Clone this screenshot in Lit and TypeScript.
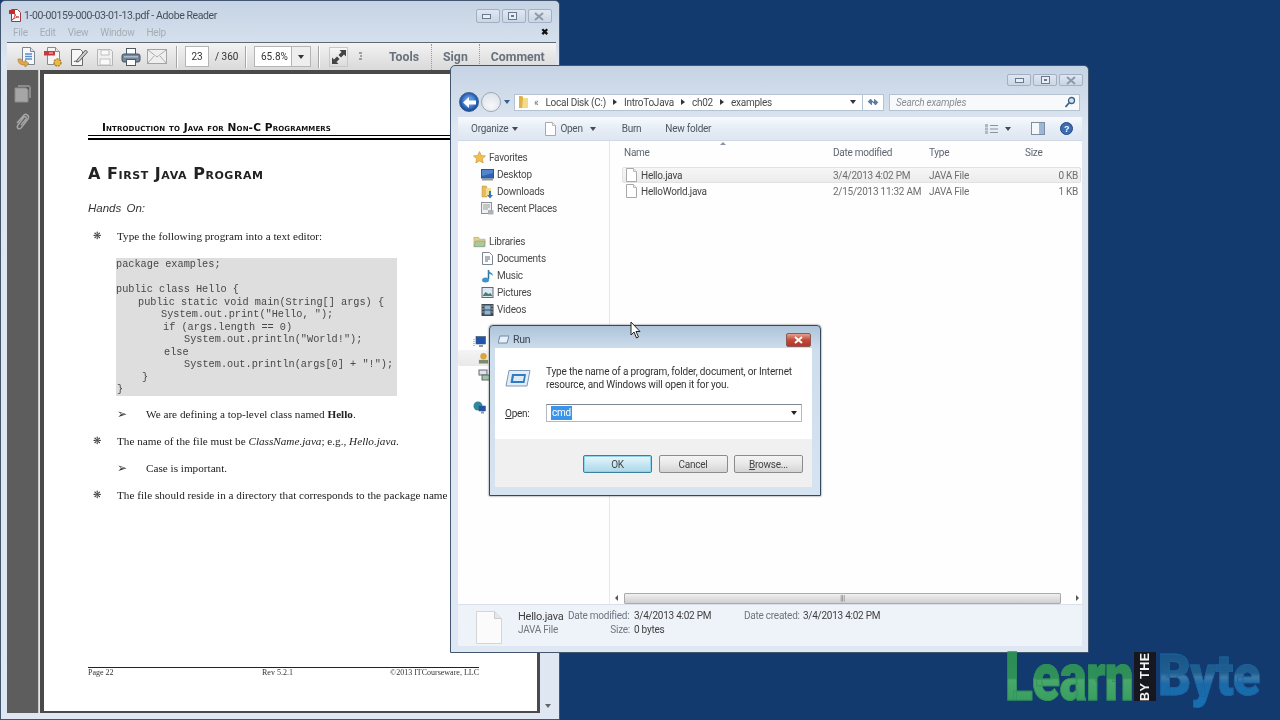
import { LitElement, css, html, svg } from 'lit';
import { customElement } from 'lit/decorators.js';

const codeLines: [number, string][] = [
  [0, 'package examples;'],
  [0, ''],
  [0, 'public class Hello {'],
  [22, 'public static void main(String[] args) {'],
  [45, 'System.out.print("Hello, ");'],
  [47, 'if (args.length == 0)'],
  [68, 'System.out.println("World!");'],
  [48, 'else'],
  [68, 'System.out.println(args[0] + "!");'],
  [26, '}'],
  [1, '}'],
];

const fileIcon = svg`<svg width="11" height="14" viewBox="0 0 11 14"><path d="M.5.500h7l3 3v10H.5z" fill="#fff" stroke="#a8a8a8"/><path d="M7.500.5v3h3" fill="#eee" stroke="#bbb"/></svg>`;
const winBtnMin = svg`<svg width="9" height="5" viewBox="0 0 9 5"><rect x=".5" y=".5" width="8" height="4" fill="#e8eef5" stroke="#6a7a8e"/></svg>`;
const winBtnMax = svg`<svg width="9" height="8" viewBox="0 0 9 8"><rect x=".5" y=".5" width="8" height="7" fill="#e8eef5" stroke="#6a7a8e"/><rect x="3" y="3" width="3" height="2" fill="#6a7a8e"/></svg>`;
const winBtnClose = svg`<svg width="10" height="9" viewBox="0 0 10 9"><path d="M1 1l8 7M9 1L1 8" stroke="#8c9aab" stroke-width="2"/></svg>`;

const readerIcons = [
  svg`<svg width="20" height="22" viewBox="0 0 20 22"><path d="M5.500 1.500h8l4 4v13h-12z" fill="#f6f8fb" stroke="#7a8797"/><path d="M13.500 1.500v4h4" fill="#dfe5ec" stroke="#7a8797"/><path d="M8 8h7M8 10.500h7M8 13h7" stroke="#5b8ccb" stroke-width="1.300"/><path d="M1 13c0 4 2 6 7 6v2l4-3.500L8 14v2c-2 0-3-1-4-3z" fill="#e2a548" stroke="#a8752a" stroke-width=".6"/></svg>`,
  svg`<svg width="20" height="22" viewBox="0 0 20 22"><path d="M4.500 1.500h8l4 4v13h-12z" fill="#f7f4f4" stroke="#8a8a8a"/><path d="M12.500 1.500v4h4" fill="#e5e5e5" stroke="#8a8a8a"/><rect x="1" y="5" width="11" height="4.500" fill="#c8383f"/><path d="M6 7h4" stroke="#f3c9c9"/><circle cx="14.500" cy="16.500" r="3.500" fill="#eab94a" stroke="#a9822b" stroke-width="1.500" stroke-dasharray="2 1"/></svg>`,
  svg`<svg width="20" height="22" viewBox="0 0 20 22"><path d="M2.500 3.500h9l2 2v14h-11z" fill="#f6f6f6" stroke="#6a6a6a"/><path d="M5 16c1-2 2 0 3-1" fill="none" stroke="#555"/><path d="M8 14l8.500-10 2 2L10 15.500 7.500 16z" fill="#cfcfcf" stroke="#5a5a5a"/></svg>`,
  svg`<svg width="18" height="20" viewBox="0 0 18 20"><path d="M1.500 2.500h13l2 2v14h-15z" fill="#f0f0f0" stroke="#b5b5b5"/><rect x="5" y="3" width="8" height="5" fill="#fafafa" stroke="#bfbfbf"/><rect x="4" y="12" width="10" height="6" fill="#fafafa" stroke="#bfbfbf"/></svg>`,
  svg`<svg width="20" height="20" viewBox="0 0 20 20"><rect x="5.500" y="1.500" width="9" height="6" fill="#fff" stroke="#4e5a68"/><rect x="1" y="7" width="18" height="8" rx="2" fill="#73879c" stroke="#46525f"/><rect x="3" y="9" width="14" height="1.500" fill="#a9bccd"/><rect x="5.500" y="12.500" width="9" height="6" fill="#fff" stroke="#4e5a68"/></svg>`,
  svg`<svg width="20" height="15" viewBox="0 0 20 15"><rect x=".5" y=".5" width="19" height="14" fill="#efefef" stroke="#a3a3a3"/><path d="M1 1l9 7 9-7M1 14l6-7M19 14l-6-7" fill="none" stroke="#adadad"/></svg>`,
];

const navIcons: Record<string, unknown> = {
  star: svg`<svg width="13" height="13" viewBox="0 0 13 13"><path d="M6.500.5l1.800 3.900 4.200.5-3.100 2.900.8 4.200-3.700-2.100-3.700 2.100.8-4.200L.5 4.900l4.200-.5z" fill="#f2bf4a" stroke="#c28f3e" stroke-width=".6"/></svg>`,
  desktop: svg`<svg width="13" height="12" viewBox="0 0 13 12"><rect x=".5" y=".5" width="12" height="8.500" fill="#2f62b5" stroke="#47525f"/><path d="M1 1h11v3L1 7z" fill="#4f86cf"/><rect x="1" y="9" width="11" height="2.500" fill="#8d98a5"/></svg>`,
  downloads: svg`<svg width="13" height="14" viewBox="0 0 13 14"><path d="M1 1h4l1 1v10H1z" fill="#e3bd5c" stroke="#b7923f" stroke-width=".5"/><path d="M5 3h5v8H5z" fill="#f1dc94"/><path d="M8 6v4H6l3 3.500 3-3.500h-2V6z" fill="#2f78c2"/></svg>`,
  recent: svg`<svg width="13" height="13" viewBox="0 0 13 13"><rect x=".5" y=".5" width="10" height="11" fill="#eef0f2" stroke="#8c9298"/><path d="M2 3h7M2 5h7M2 7h5" stroke="#9c9c9c"/><rect x="7" y="8" width="5.500" height="4.500" fill="#aab2ba"/></svg>`,
  libraries: svg`<svg width="14" height="12" viewBox="0 0 14 12"><path d="M1 1h5l1 2h6v8H1z" fill="#e7d08a" stroke="#a99a5f" stroke-width=".6"/><path d="M3 5h10l-1 6H1z" fill="#a9c9a0" stroke="#7d9a88" stroke-width=".6"/></svg>`,
  documents: svg`<svg width="11" height="13" viewBox="0 0 11 13"><path d="M.5.500h7l3 3v9H.5z" fill="#fff" stroke="#7d8590"/><path d="M3 5h5M3 7h5M3 9h3" stroke="#5a6b85"/></svg>`,
  music: svg`<svg width="12" height="14" viewBox="0 0 12 14"><path d="M7 1v9" stroke="#2f6f9e" stroke-width="1.500"/><ellipse cx="4" cy="11" rx="3.500" ry="2.500" fill="#3f93c9"/><path d="M7 1c1 3 5 2 4 6-1-2-3-2-4-2z" fill="#3f93c9"/></svg>`,
  pictures: svg`<svg width="12" height="11" viewBox="0 0 12 11"><rect x=".5" y=".5" width="11" height="10" fill="#dbe9f2" stroke="#667"/><path d="M1 9l3-4 3 2 2-1 2 3z" fill="#4b7e6e"/></svg>`,
  videos: svg`<svg width="12" height="12" viewBox="0 0 12 12"><rect width="12" height="12" fill="#3f4a55"/><rect x="3" y="1.500" width="6" height="4" fill="#8fb7d3"/><rect x="3" y="6.500" width="6" height="4" fill="#8fb7d3"/><path d="M1 2h1M1 5h1M1 8h1M10 2h1M10 5h1M10 8h1" stroke="#fff"/></svg>`,
  computer: svg`<svg width="13" height="12" viewBox="0 0 13 12"><path d="M1 3v8" stroke="#7d8590" stroke-dasharray="1 1"/><rect x="3" y=".5" width="9.500" height="7.500" fill="#1f55ad" stroke="#47525f" stroke-width=".6"/><path d="M6 9h4v2H6z" fill="#8d98a5"/></svg>`,
  disk: svg`<svg width="12" height="13" viewBox="0 0 12 13"><circle cx="6" cy="4" r="3.500" fill="#d9a441"/><path d="M1 8h10v4H1z" fill="#7d8b6a"/></svg>`,
  network: svg`<svg width="13" height="12" viewBox="0 0 13 12"><rect x="1" y="1" width="8" height="5" fill="#dde3ea" stroke="#667"/><rect x="4" y="6" width="8" height="5" fill="#9cc79c" stroke="#667"/></svg>`,
  globe: svg`<svg width="13" height="13" viewBox="0 0 13 13"><circle cx="5" cy="5" r="4.500" fill="#2f8a9c"/><rect x="6" y="5" width="6.500" height="5" fill="#1f55ad" stroke="#47525f" stroke-width=".5"/><path d="M8 10.500h3v2H8z" fill="#8d98a5"/></svg>`,
};

const navRows: [string, string, boolean][] = [
  ['star', 'Favorites', true],
  ['desktop', 'Desktop', false],
  ['downloads', 'Downloads', false],
  ['recent', 'Recent Places', false],
  ['', '', true],
  ['libraries', 'Libraries', true],
  ['documents', 'Documents', false],
  ['music', 'Music', false],
  ['pictures', 'Pictures', false],
  ['videos', 'Videos', false],
];

@customElement('app-root')
export class AppRoot extends LitElement {
  static styles = css`
    :host {
      display: block;
      position: relative;
      width: 1280px;
      height: 720px;
      overflow: hidden;
      background: #133a6f;
      font-family: Roboto, 'Open Sans', sans-serif;
      font-size: 10px;
      letter-spacing: -0.25px;
      color: #444;
      filter: blur(0.3px);
    }
    .window {
      position: absolute;
      box-sizing: border-box;
      display: flex;
      flex-direction: column;
      border: 1px solid #42576f;
      border-radius: 5px 5px 0 0;
      background: linear-gradient(#c5d3e4, #dde6f1 60px, #dfe7f2);
    }
    .win-btns {
      display: flex;
      gap: 2px;
    }
    .win-btn {
      width: 24px;
      height: 14px;
      box-sizing: border-box;
      border: 1px solid #a2b0c2;
      border-radius: 2px;
      background: linear-gradient(#dfe7f1, #cbd6e4);
      display: flex;
      align-items: center;
      justify-content: center;
    }

    /* reader */
    .reader {
      left: 0;
      top: 0;
      width: 560px;
      height: 720px;
      padding: 0 3px 6px 6px;
    }
    .reader-title {
      height: 21px;
      padding: 8px 4px 0 2px;
      box-sizing: border-box;
      display: flex;
      align-items: flex-start;
      font-size: 10.5px;
      letter-spacing: -0.4px;
      color: #474f5a;
    }
    .reader-title svg {
      margin-right: 3px;
      flex: none;
    }
    .reader-title .name {
      flex: 1;
      line-height: 13px;
    }
    .menu {
      height: 20px;
      display: flex;
      align-items: center;
      color: #a6acb4;
      padding-left: 6px;
      gap: 12px;
    }
    .menu .x {
      margin-left: auto;
      margin-right: 7px;
      color: #111;
      font-weight: 700;
      font-size: 9px;
    }
    .reader-bar {
      height: 28px;
      display: flex;
      align-items: center;
      border-top: 1px solid #5d6873;
      background: linear-gradient(#f3f3f3, #d9d9d9);
      box-sizing: border-box;
      padding-left: 7px;
      letter-spacing: 0;
      overflow: hidden;
    }
    .tool {
      width: 26px;
      display: flex;
      justify-content: center;
      flex: none;
    }
    .sep {
      width: 1px;
      height: 22px;
      background: #a5a5a5;
      border-right: 1px solid #fff;
      flex: none;
    }
    .box {
      height: 21px;
      box-sizing: border-box;
      border: 1px solid #b5b5b5;
      background: #fff;
      display: flex;
      align-items: center;
      justify-content: center;
      color: #333;
      flex: none;
    }
    .zoom-caret {
      width: 18px;
      height: 100%;
      border-left: 1px solid #b5b5b5;
      background: #eee;
      display: flex;
      align-items: center;
      justify-content: center;
    }
    .caret {
      width: 0;
      height: 0;
      border-left: 3px solid transparent;
      border-right: 3px solid transparent;
      border-top: 4px solid #333;
    }
    .fit {
      width: 19px;
      height: 20px;
      background: linear-gradient(#f7f7f7, #dcdcdc);
      border: 1px solid #c8c8c8;
      box-sizing: border-box;
      margin-left: 9px;
      flex: none;
      display: flex;
      align-items: center;
      justify-content: center;
    }
    .pane-tab {
      font-size: 12.3px;
      font-weight: 700;
      color: #68717d;
      flex: none;
    }
    .dots {
      width: 0;
      height: 26px;
      border-left: 1px dotted #999;
      flex: none;
    }
    .reader-main {
      flex: 1;
      display: flex;
      min-height: 0;
    }
    .rail {
      width: 32px;
      background: #5d5d5d;
      margin-right: 1px;
      border-right: 1px solid #c8c8c8;
      display: flex;
      flex-direction: column;
      align-items: center;
      gap: 9px;
      padding-top: 14px;
      box-sizing: border-box;
      flex: none;
    }
    .doc-area {
      width: 500px;
      height: 643px;
      box-sizing: border-box;
      background: #fff;
      border: solid #4a4a4a;
      border-width: 4px 3px 2px 4px;
      display: flex;
      flex-direction: column;
      padding-left: 44px;
      color: #111;
      white-space: nowrap;
      flex: none;
      overflow: hidden;
      letter-spacing: 0;
    }
    .side-scroll {
      flex: 1;
      display: flex;
      align-items: flex-end;
      justify-content: center;
      padding-bottom: 5px;
    }
    .side-scroll .caret {
      border-top-color: #666;
    }
    .running {
      margin: 47px 0 0 14px;
      height: 12px;
      line-height: 12px;
      font-family: 'DejaVu Sans', sans-serif;
      font-weight: 700;
      font-variant: small-caps;
      font-size: 10.6px;
      letter-spacing: 0.12px;
    }
    .rule {
      margin-top: 2px;
      height: 5px;
      box-sizing: border-box;
      width: 420px;
      border-top: 1px solid #000;
      border-bottom: 2.5px solid #000;
    }
    .heading {
      margin-top: 26px;
      height: 16px;
      line-height: 16px;
      font-family: 'DejaVu Sans', sans-serif;
      font-weight: 700;
      font-variant: small-caps;
      font-size: 16px;
      letter-spacing: 0.55px;
      color: #222;
    }
    .hands {
      margin-top: 19px;
      height: 14px;
      line-height: 14px;
      font-style: italic;
      font-family: 'Liberation Sans', sans-serif;
      font-size: 11.5px;
      word-spacing: 2px;
      color: #333;
    }
    .para {
      height: 14px;
      line-height: 14px;
      margin-top: 13px;
      font-family: 'Liberation Serif', serif;
      font-size: 11.2px;
      display: flex;
      align-items: center;
      padding-left: 2px;
      color: #222;
    }
    .para .mark {
      width: 27px;
      padding-left: 3px;
      box-sizing: border-box;
      flex: none;
      color: #333;
      font-size: 10px;
    }
    .para.sub {
      padding-left: 29px;
    }
    .para.sub .mark {
      width: 29px;
      padding-left: 0;
      font-size: 12px;
    }
    .code {
      margin: 15px 0 0 28px;
      width: 281px;
      height: 138px;
      background: #dedede;
      font-family: 'Liberation Mono', monospace;
      font-size: 10.25px;
      line-height: 12.5px;
      color: #484848;
      flex: none;
    }
    .code div {
      height: 12.5px;
      white-space: pre;
    }
    .foot {
      margin-top: 165px;
      width: 391px;
      display: grid;
      grid-template-columns: 174px 1fr auto;
      border-top: 1px solid #222;
      font-family: 'Liberation Serif', serif;
      font-size: 8px;
      line-height: 9px;
      color: #333;
    }

    /* explorer */
    .explorer {
      left: 450px;
      top: 65px;
      width: 639px;
      height: 588px;
      padding: 0 6px 6px 7px;
    }
    .ex-title {
      height: 26px;
      padding-top: 8px;
      margin-right: -1px;
      box-sizing: border-box;
      display: flex;
      justify-content: flex-end;
      flex: none;
    }
    .ex-title .win-btn {
      height: 12px;
    }
    .ex-addr {
      height: 20px;
      display: flex;
      align-items: center;
      flex: none;
    }
    .nav-btn {
      width: 20px;
      height: 20px;
      border-radius: 50%;
      box-sizing: border-box;
      flex: none;
      margin-left: 1px;
    }
    .nav-btn.back {
      background: radial-gradient(circle at 50% 45%, #5f96e0 30%, #1b54a6 65%, #12346e);
      border: 1px solid #3a5f92;
      display: flex;
      align-items: center;
      justify-content: center;
    }
    .nav-btn.fwd {
      margin-left: 2px;
      background: radial-gradient(circle at 50% 70%, #f6f8fa, #d8dee6);
      border: 1px solid #9aa7b7;
    }
    .nav-drop {
      margin: 0 4px 0 3px;
      border-top-color: #2f5f92;
    }
    .crumbs {
      width: 370px;
      height: 17px;
      box-sizing: border-box;
      background: #fff;
      border: 1px solid #b5c2d2;
      display: flex;
      align-items: center;
      padding-left: 3px;
      flex: none;
      color: #4a4a4a;
    }
    .crumbs .tri {
      width: 0;
      height: 0;
      border-top: 3px solid transparent;
      border-bottom: 3px solid transparent;
      border-left: 4px solid #333;
      margin: 0 7px 0 7px;
    }
    .crumbs .chev {
      margin: 0 7px 0 5px;
      color: #666;
    }
    .crumbs .end {
      margin-left: auto;
      display: flex;
      align-items: center;
      height: 100%;
    }
    .crumbs .end .refresh {
      width: 20px;
      height: 100%;
      border-left: 1px solid #b5c2d2;
      margin-left: 6px;
      display: flex;
      align-items: center;
      justify-content: center;
    }
    .search {
      margin-left: 5px;
      width: 191px;
      height: 17px;
      box-sizing: border-box;
      background: #f7f9fb;
      border: 1px solid #b5c2d2;
      display: flex;
      align-items: center;
      justify-content: space-between;
      padding: 0 3px 0 6px;
      font-style: italic;
      color: #8a8f96;
      flex: none;
    }
    .ex-bar {
      margin-top: 5px;
      height: 24px;
      flex: none;
      display: flex;
      align-items: center;
      background: linear-gradient(#f7fafd, #e6edf6 50%, #dde6f1);
      border-bottom: 1px solid #cfd8e3;
      box-sizing: border-box;
      color: #50565e;
      padding-left: 13px;
    }
    .ex-bar .caret {
      border-top-color: #4a4a4a;
    }
    .ex-body {
      flex: 1;
      display: flex;
      background: #fefefe;
      min-height: 0;
    }
    .nav {
      width: 152px;
      padding-top: 8px;
      border-right: 1px solid #e4e8ee;
      box-sizing: border-box;
      flex: none;
    }
    .nav-row {
      height: 17px;
      display: flex;
      align-items: center;
      gap: 3px;
      padding-left: 23px;
      color: #4a4a4a;
    }
    .nav-row.head {
      padding-left: 15px;
    }
    .nav-row.gap {
      height: 16px;
    }
    .nav-row svg {
      width: 13px;
      flex: none;
    }
    .nav-extra {
      margin-top: 16px;
      padding-left: 15px;
      height: 16px;
      display: flex;
      align-items: center;
    }
    .nav-extra.sel {
      margin-top: 0;
      width: 31px;
      box-sizing: border-box;
      padding-left: 20px;
      background: linear-gradient(#f4f4f4, #e9e9e9);
      border-radius: 2px;
    }
    .nav-extra.plain {
      margin-top: 1px;
      padding-left: 20px;
    }
    .list {
      flex: 1;
      display: flex;
      flex-direction: column;
      min-width: 0;
      position: relative;
    }
    .cols {
      display: grid;
      grid-template-columns: 209px 96px 96px 1fr;
      padding-left: 14px;
      height: 22px;
      margin-bottom: 4px;
      align-items: center;
      color: #5f6670;
    }
    .sort {
      position: absolute;
      left: 110px;
      top: 1px;
      width: 0;
      height: 0;
      border-left: 3px solid transparent;
      border-right: 3px solid transparent;
      border-bottom: 3px solid #8a95a3;
    }
    .file {
      display: grid;
      grid-template-columns: 210px 96px 1fr auto;
      height: 16px;
      align-items: center;
      color: #6e6e6e;
      margin: 0 1px 0 12px;
      box-sizing: border-box;
      padding-right: 2px;
      border: 1px solid transparent;
      border-radius: 2px;
      flex: none;
    }
    .file.hot {
      background: linear-gradient(#f6f6f6, #ececec);
      border-color: #e2e2e2;
    }
    .file .fname {
      display: flex;
      align-items: center;
      gap: 4px;
      padding-left: 3px;
      color: #444;
    }
    .spacer {
      flex: 1;
    }
    .hscroll {
      height: 12px;
      display: flex;
      align-items: center;
      padding: 0 3px 0 5px;
      flex: none;
    }
    .hscroll .thumb {
      flex: 1;
      height: 11px;
      margin: 0 15px 0 6px;
      background: linear-gradient(#f0f0f0, #cfcfcf);
      border: 1px solid #aaa;
      box-sizing: border-box;
      display: flex;
      align-items: center;
      justify-content: center;
      color: #666;
      font-size: 7px;
      border-radius: 1px;
    }
    .tri-l,
    .tri-r {
      width: 0;
      height: 0;
      border-top: 3px solid transparent;
      border-bottom: 3px solid transparent;
    }
    .tri-l {
      border-right: 3px solid #555;
    }
    .tri-r {
      border-left: 3px solid #555;
    }
    .details {
      height: 42px;
      flex: none;
      background: #eef2f9;
      border-top: 1px solid #d9e0ea;
      box-sizing: border-box;
      display: flex;
      color: #6f7680;
    }
    .details .big {
      width: 26px;
      height: 33px;
      margin: 6px 16px 0 18px;
      flex: none;
    }
    .detail-grid {
      display: grid;
      grid-template-columns: 50px 66px 110px 59px auto;
      grid-template-rows: 14px 14px;
      padding-top: 5px;
      white-space: nowrap;
    }
    .detail-grid b {
      font-weight: 400;
      color: #3f3f3f;
    }
    .detail-grid .size-label {
      text-align: right;
      padding-right: 4px;
    }

    /* run dialog */
    .run {
      position: absolute;
      left: 489px;
      top: 325px;
      width: 332px;
      height: 171px;
      box-sizing: border-box;
      background: linear-gradient(#aec4da, #cfdeec 24px, #d6e3f0);
      border: 1px solid #34495f;
      border-radius: 4px 4px 0 0;
      padding: 0 8px 8px 5px;
      display: flex;
      flex-direction: column;
      box-shadow: 0 0 2px #555;
    }
    .run-title {
      height: 22px;
      flex: none;
      display: flex;
      align-items: center;
      gap: 4px;
      padding: 5px 1px 0 3px;
      box-sizing: border-box;
      color: #3a4552;
      font-size: 10.5px;
    }
    .run-close {
      margin-left: auto;
      width: 25px;
      height: 14px;
      background: linear-gradient(#e5a191, #c04a3a 50%, #b5372a);
      border: 1px solid #8c5a55;
      border-radius: 2px;
      box-sizing: border-box;
      display: flex;
      align-items: center;
      justify-content: center;
    }
    .run-body {
      background: #fff;
      height: 91px;
      flex: none;
      padding: 18px 10px 0 10px;
      box-sizing: border-box;
      display: grid;
      grid-template-columns: 41px 256px;
      grid-template-rows: 38px 18px;
      color: #333;
    }
    .run-text {
      line-height: 12.5px;
      font-size: 10px;
      letter-spacing: -0.15px;
      white-space: nowrap;
    }
    .run-label {
      align-self: center;
    }
    .run-input {
      height: 18px;
      box-sizing: border-box;
      border: 1px solid #b4bac2;
      border-top-color: #7d8792;
      display: flex;
      align-items: center;
      padding: 0 4px;
      justify-content: space-between;
    }
    .run-input span {
      background: #3a94ea;
      color: #fff;
      padding: 0 1px;
      line-height: 14px;
    }
    .run-foot {
      flex: 1;
      background: #f0f0f0;
      display: flex;
      justify-content: flex-end;
      gap: 6.500px;
      padding: 16px 9px 0 0;
      box-sizing: border-box;
    }
    .run-btn {
      width: 69px;
      height: 18px;
      box-sizing: border-box;
      border: 1px solid #8c8c8c;
      border-radius: 2px;
      background: linear-gradient(#f4f4f4, #e8e8e8 50%, #d4d4d4);
      display: flex;
      align-items: center;
      justify-content: center;
      color: #444;
    }
    .run-btn.def {
      border: 1px solid #3d7f9d;
      background: linear-gradient(#eaf6fb, #c7e6f3 50%, #acd8ea);
      box-shadow: inset 0 0 0 1px #8fd4ec;
    }
    .pointer {
      position: absolute;
      left: 630px;
      top: 321px;
    }

    /* logo */
    .logo {
      position: absolute;
      left: 1005px;
      top: 652px;
      height: 56px;
      display: flex;
      align-items: flex-start;
      letter-spacing: 0;
    }
    .slot {
      flex: none;
    }
    .slot.l {
      width: 129px;
    }
    .slot.b {
      width: 104px;
      margin-left: 2px;
    }
    .logo-word {
      display: inline-block;
      font-family: Roboto, sans-serif;
      font-weight: 900;
      transform-origin: left top;
      background-clip: text;
      -webkit-background-clip: text;
      color: transparent;
      white-space: nowrap;
    }
    .learn {
      font-size: 66px;
      line-height: 66px;
      margin-top: -7px;
      letter-spacing: -1px;
      background-image: linear-gradient(#2c8a57 0, #2f9058 50%, #4aa76c 53%, #2f9a5a 100%);
      -webkit-text-stroke: 0.8px #2f9058;
      transform: scaleX(0.78);
    }
    .byte {
      font-size: 57px;
      line-height: 66px;
      margin-top: -9px;
      letter-spacing: -1px;
      background-image: linear-gradient(#174f83 0, #1f5f8f 45%, #3d7aa8 52%, #1a6aa8 62%, #1670b4 100%);
      -webkit-text-stroke: 0.8px #1c62a0;
      transform: scaleX(0.9);
    }
    .by-the {
      width: 22px;
      height: 49px;
      background: #17171f;
      color: #f2f2f2;
      font-family: 'Liberation Sans', sans-serif;
      font-weight: 700;
      font-size: 12.5px;
      letter-spacing: 0.5px;
      writing-mode: vertical-rl;
      transform: rotate(180deg);
      text-align: center;
      line-height: 22px;
      flex: none;
    }
  `;

  private winButtons() {
    return html`<div class="win-btns">
      <div class="win-btn">${winBtnMin}</div>
      <div class="win-btn">${winBtnMax}</div>
      <div class="win-btn">${winBtnClose}</div>
    </div>`;
  }

  private renderReader() {
    return html`<div class="window reader">
      <div class="reader-title">
        <svg width="12" height="13" viewBox="0 0 12 13"><path d="M2.500.5h6l3 3v9h-9z" fill="#fff" stroke="#9a3a3a"/><rect y="1" width="6" height="4" fill="#c42b2b"/><path d="M3 11c2-1 3-4 3-6 0 2 1 3 4 3-2 0-5 1-7 3z" fill="none" stroke="#c42b2b" stroke-width=".8"/></svg>
        <span class="name">1-00-00159-000-03-01-13.pdf - Adobe Reader</span>
        ${this.winButtons()}
      </div>
      <div class="menu">
        <span>File</span><span>Edit</span><span>View</span><span>Window</span><span>Help</span>
        <span class="x">✖</span>
      </div>
      <div class="reader-bar">
        ${readerIcons.map((i) => html`<div class="tool">${i}</div>`)}
        <div class="sep" style="margin-left:6px"></div>
        <div class="box" style="width:24px;margin-left:7px">23</div>
        <span style="margin-left:6px;width:22px;color:#333;flex:none;white-space:nowrap">/ 360</span>
        <div class="sep" style="margin-left:8px"></div>
        <div class="box" style="width:57px;margin-left:7px;justify-content:flex-start;padding-left:6px">
          <span style="flex:1">65.8%</span>
          <div class="zoom-caret"><div class="caret"></div></div>
        </div>
        <div class="sep" style="margin-left:7px"></div>
        <div class="fit">
          <svg width="16" height="16" viewBox="0 0 16 16"><path d="M15 1H8.500l2 2L7.500 6l2.500 2.500 3-3 2 2zM1 15h6.500l-2-2 3-3L6 7.500l-3 3-2-2z" fill="#444"/></svg>
        </div>
        <svg style="margin-left:11px;flex:none" width="3" height="9" viewBox="0 0 3 9"><path d="M0 1h3M1 4h2M0 7h3" stroke="#555"/></svg>
        <span class="pane-tab" style="margin-left:27px">Tools</span>
        <div class="dots" style="margin-left:12px"></div>
        <span class="pane-tab" style="margin-left:11px">Sign</span>
        <div class="dots" style="margin-left:11px"></div>
        <span class="pane-tab" style="margin-left:11px">Comment</span>
      </div>
      <div class="reader-main">
        <div class="rail">
          <svg width="18" height="19" viewBox="0 0 18 19"><path d="M4 1h11l2 2v11h-2V3H4z" fill="#8b8b8b"/><path d="M1 4h11l2 2v12H1z" fill="#a6a6a6" stroke="#8b8b8b"/></svg>
          <svg width="16" height="19" viewBox="0 0 16 19"><path d="M2 11L9 3c2-2 6 1 4 4l-7 9c-2 2-5 0-3-3l6-8c1-1 3 0 2 2l-5 6" fill="none" stroke="#a6a6a6" stroke-width="1.400"/></svg>
        </div>
        <div class="doc-area">
          <div class="running">Introduction to Java for Non-C Programmers</div>
          <div class="rule"></div>
          <div class="heading">A First Java Program</div>
          <div class="hands">Hands On:</div>
          <div class="para" style="margin-top:14px"><span class="mark">❋</span>Type the following program into a text editor:</div>
          <div class="code">
            ${codeLines.map(([indent, line]) => html`<div style="padding-left:${indent}px">${line}</div>`)}
          </div>
          <div class="para sub" style="margin-top:11px"><span class="mark">➢</span><span>We are defining a top-level class named <b>Hello</b>.</span></div>
          <div class="para"><span class="mark">❋</span><span>The name of the file must be <i>ClassName.java</i>; e.g., <i>Hello.java</i>.</span></div>
          <div class="para sub"><span class="mark">➢</span>Case is important.</div>
          <div class="para"><span class="mark">❋</span>The file should reside in a directory that corresponds to the package name</div>
          <div class="foot"><span>Page 22</span><span>Rev 5.2.1</span><span>©2013 ITCourseware, LLC</span></div>
        </div>
        <div class="side-scroll"><div class="caret"></div></div>
      </div>
    </div>`;
  }

  private renderExplorer() {
    return html`<div class="window explorer">
      <div class="ex-title">${this.winButtons()}</div>
      <div class="ex-addr">
        <div class="nav-btn back">
          <svg width="13" height="11" viewBox="0 0 13 11"><path d="M6 0L0 5.500 6 11V7.500h7v-4H6z" fill="#fff"/></svg>
        </div>
        <div class="nav-btn fwd"></div>
        <div class="caret nav-drop"></div>
        <div class="crumbs">
          <svg width="11" height="14" viewBox="0 0 11 14"><path d="M1 1h3l1 1v11H1z" fill="#dfb341"/><path d="M5 3h5v10H4z" fill="#f1da8a"/></svg>
          <span class="chev" style="margin-left:5px">«</span>
          <span>Local Disk (C:)</span><i class="tri"></i>
          <span>IntroToJava</span><i class="tri"></i>
          <span>ch02</span><i class="tri"></i>
          <span>examples</span>
          <span class="end">
            <i class="caret" style="border-top-color:#333"></i>
            <span class="refresh">
              <svg width="12" height="12" viewBox="0 0 12 12"><path d="M1 6l2.500-3L6 6H4.500v3M11 6L8.500 9 6 6h1.500V3" fill="#587fa8" stroke="#345a82" stroke-width=".6"/></svg>
            </span>
          </span>
        </div>
        <div class="search">
          <span>Search examples</span>
          <svg width="12" height="12" viewBox="0 0 12 12"><circle cx="7.500" cy="4.500" r="3" fill="#cfe3f5" stroke="#3a6186" stroke-width="1.300"/><path d="M5 7l-3.500 4" stroke="#3a6186" stroke-width="1.800"/></svg>
        </div>
      </div>
      <div class="ex-bar">
        <span>Organize</span><i class="caret" style="margin-left:4px"></i>
        <span style="margin-left:27px;display:flex">${fileIcon}</span>
        <span style="margin-left:4px">Open</span><i class="caret" style="margin-left:7px"></i>
        <span style="margin-left:26px">Burn</span>
        <span style="margin-left:24px">New folder</span>
        <span style="margin-left:auto;display:flex;align-items:center;margin-right:9px">
          <svg width="13" height="10" viewBox="0 0 13 10"><path d="M5 1.500h8M5 5h8M5 8.500h8" stroke="#8a94a0"/><rect x="0" y="0" width="3" height="3" fill="#b0b8c2"/><rect x="0" y="3.500" width="3" height="3" fill="#b0b8c2"/><rect x="0" y="7" width="3" height="3" fill="#b0b8c2"/></svg>
          <i class="caret" style="margin-left:7px"></i>
          <svg style="margin-left:20px" width="14" height="13" viewBox="0 0 14 13"><rect x=".5" y=".5" width="13" height="12" fill="#f4f7fb" stroke="#7e8da0"/><rect x="8" y="1" width="5" height="11" fill="#9db8d6"/></svg>
          <svg style="margin-left:15px" width="13" height="13" viewBox="0 0 13 13"><circle cx="6.500" cy="6.500" r="6" fill="#3a6db5" stroke="#24477f"/><text x="6.500" y="10" font-size="9" font-weight="700" fill="#fff" text-anchor="middle" font-family="Liberation Sans">?</text></svg>
        </span>
      </div>
      <div class="ex-body">
        <div class="nav">
          ${navRows.map(
            ([icon, label, head]) =>
              html`<div class="nav-row ${head ? 'head' : ''} ${icon ? '' : 'gap'}">
                ${icon ? navIcons[icon] : ''}<span>${label}</span>
              </div>`
          )}
          <div class="nav-extra">${navIcons.computer}</div>
          <div class="nav-extra sel">${navIcons.disk}</div>
          <div class="nav-extra plain">${navIcons.network}</div>
          <div class="nav-extra">${navIcons.globe}</div>
        </div>
        <div class="list">
          <i class="sort"></i>
          <div class="cols"><span>Name</span><span>Date modified</span><span>Type</span><span>Size</span></div>
          <div class="file hot">
            <span class="fname">${fileIcon}Hello.java</span><span>3/4/2013 4:02 PM</span><span>JAVA File</span><span>0 KB</span>
          </div>
          <div class="file">
            <span class="fname">${fileIcon}HelloWorld.java</span><span>2/15/2013 11:32 AM</span><span>JAVA File</span><span>1 KB</span>
          </div>
          <div class="spacer"></div>
          <div class="hscroll">
            <i class="tri-l"></i>
            <div class="thumb">|||</div>
            <i class="tri-r"></i>
          </div>
        </div>
      </div>
      <div class="details">
        <svg class="big" viewBox="0 0 26 33"><path d="M.5.5h18l7 7v25H.5z" fill="#fbfbfb" stroke="#d5d5d5"/><path d="M18.500.5v7h7" fill="#e6e6e6" stroke="#ccc"/></svg>
        <div class="detail-grid">
          <b style="font-size:11px">Hello.java</b><span>Date modified:</span><b>3/4/2013 4:02 PM</b><span>Date created:</span><b>3/4/2013 4:02 PM</b>
          <span>JAVA File</span><span class="size-label">Size:</span><b>0 bytes</b><span></span><span></span>
        </div>
      </div>
    </div>`;
  }

  private renderRun() {
    return html`<div class="run">
      <div class="run-title">
        <svg width="11" height="9" viewBox="0 0 11 9"><path d="M2 1h9L9 8H0z" fill="#e8f0f8" stroke="#6d88a6"/></svg>
        <span>Run</span>
        <div class="run-close">
          <svg width="9" height="8" viewBox="0 0 9 8"><path d="M1 1l7 6M8 1L1 7" stroke="#fff" stroke-width="2"/></svg>
        </div>
      </div>
      <div class="run-body">
        <svg width="26" height="17" viewBox="0 0 26 17" style="margin-top:4px"><path d="M4 .5h21L22 16H1z" fill="#e4edf5" stroke="#7c98b6"/><path d="M7 4h14l-1.500 9H5.500z" fill="#2f7cc4"/><path d="M9 6h10l-1 5H8z" fill="#dfeaf5"/></svg>
        <div class="run-text">Type the name of a program, folder, document, or Internet<br />resource, and Windows will open it for you.</div>
        <div class="run-label"><u>O</u>pen:</div>
        <div class="run-input"><span>cmd</span><i class="caret" style="border-top-color:#222"></i></div>
      </div>
      <div class="run-foot">
        <div class="run-btn def">OK</div>
        <div class="run-btn">Cancel</div>
        <div class="run-btn"><span><u>B</u>rowse...</span></div>
      </div>
    </div>`;
  }

  render() {
    return html`
      ${this.renderReader()} ${this.renderExplorer()} ${this.renderRun()}
      <svg class="pointer" width="11" height="18" viewBox="0 0 11 18"><path d="M1 1v13l3-3 2.500 6 2-1-2.500-5.500h4z" fill="#fff" stroke="#222"/></svg>
      <div class="logo">
        <div class="slot l"><span class="logo-word learn">Learn</span></div>
        <div class="by-the">BY THE</div>
        <div class="slot b"><span class="logo-word byte">Byte</span></div>
      </div>
    `;
  }
}
